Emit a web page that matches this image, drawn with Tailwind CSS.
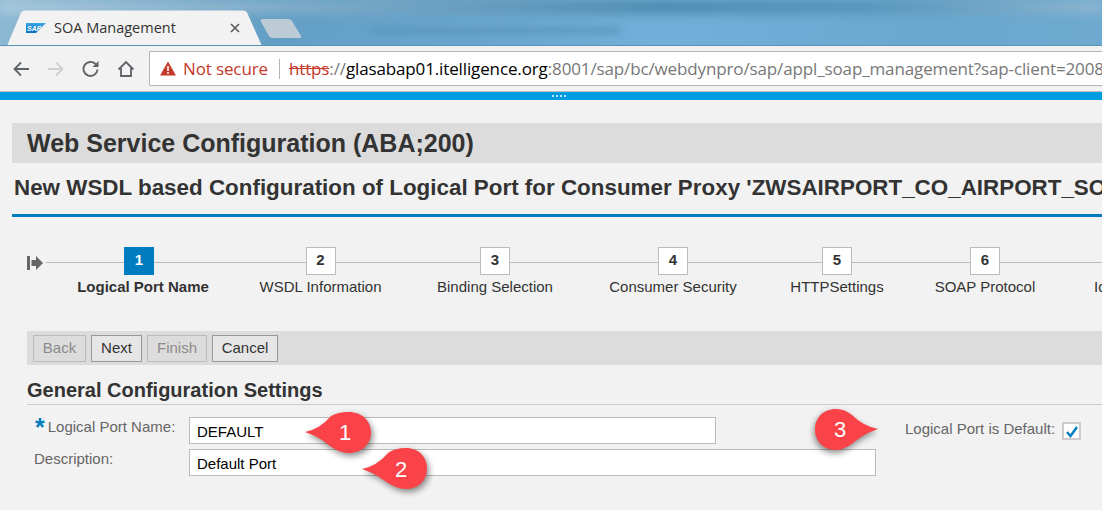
<!DOCTYPE html>
<html lang="en">
<head>
  <meta charset="UTF-8" />
  <title>SOA Management</title>
  <script src="https://cdn.jsdelivr.net/npm/@tailwindcss/browser@4"></script>
</head>
<body class="w-[1102px] h-[510px] overflow-hidden bg-[#f2f2f2] font-['Liberation_Sans',sans-serif] text-[#333] relative">

  <!-- Browser tab strip -->
  <div class="relative h-[46px] border-b border-[#5a93b5] bg-[linear-gradient(100deg,#8db9d3_0%,#639fc5_25%,#6aa6cf_45%,#72afd9_60%,#6aa8d0_85%,#6fa9cf_100%)] overflow-hidden">
    <div class="absolute left-0 top-0 w-full h-[14px] bg-[linear-gradient(90deg,#a9c8dc_0%,#7ba9c6_30%,#4f8bb0_60%,#5b96bb_80%,#8cb6d0_100%)] blur-[5px]"></div>
    <div class="absolute left-[370px] top-[27px] w-[250px] h-[7px] bg-[#5a93bb]/70 blur-[3px]"></div>
    <svg class="absolute left-0 top-0" width="320" height="46" viewBox="0 0 320 46">
      <path d="M7 46 L21 12.500 Q22 10.500 25 10.500 L243 10.500 Q246 10.500 247 12.500 L262 46 Z" fill="#f2f2f2"/>
      <path d="M263 19 L288 19 Q291 19 292 21 L301 36 Q302 38 299 38 L273 38 Q270 38 269 36 L261 22 Q260 19 263 19 Z" fill="#bccbd6"/>
    </svg>
    <div class="absolute left-[26px] top-[23px] w-[20px] h-[10px] bg-[linear-gradient(#3aa6e6,#0a6fc0)] [clip-path:polygon(0_0,100%_0,50%_100%,0_100%)] flex items-center pl-[1px]">
      <span class="text-[7px] leading-none font-bold italic text-white">SAP</span>
    </div>
    <span class="absolute left-[54px] top-[18px] text-[14.500px] leading-[20px] text-[#333] font-['Open_Sans',sans-serif]">SOA Management</span>
    <svg class="absolute left-[229px] top-[22px]" width="12" height="12" viewBox="0 0 12 12"><path d="M2 2 L10 10 M10 2 L2 10" stroke="#5a5a5a" stroke-width="1.600"/></svg>
  </div>

  <!-- Browser toolbar -->
  <div class="h-[46px] bg-[#f2f2f2] border-b border-[#bdbdbd] flex items-center pl-[12px]">
    <svg width="18" height="18" viewBox="0 0 18 18" class="mr-[17px]"><path d="M17 9 H2.500 M9 2.500 L2.500 9 L9 15.500" fill="none" stroke="#5f6368" stroke-width="1.800"/></svg>
    <svg width="18" height="18" viewBox="0 0 18 18" class="mr-[17px]"><path d="M1 9 H15.500 M9 2.500 L15.500 9 L9 15.500" fill="none" stroke="#d0d0d0" stroke-width="1.800"/></svg>
    <svg width="18" height="18" viewBox="0 0 18 18" class="mr-[17px]"><path d="M15.500 9.500 A7 7 0 1 1 13.500 4" fill="none" stroke="#5f6368" stroke-width="1.900"/><path d="M16.500 1 V7 H10.500 Z" fill="#5f6368"/></svg>
    <svg width="18" height="18" viewBox="0 0 18 18" class="mr-[14px]"><path d="M1.500 9.500 L9 2 L16.500 9.500 M4 8 V16 H14 V8" fill="none" stroke="#5f6368" stroke-width="1.800"/></svg>
    <div class="flex-1 h-[35px] bg-white border border-[#b4b4b4] border-r-0 rounded-l-[2px] flex items-center pl-[10px] overflow-hidden whitespace-nowrap font-['Open_Sans',sans-serif] text-[17px] tracking-[-0.130px]">
      <svg width="16" height="15" viewBox="0 0 16 15" class="mr-[7px] shrink-0"><path d="M8 0.500 L16 14.500 H0 Z" fill="#c5392b"/><path d="M7.200 5 H8.800 V10 H7.200 Z M7.200 11 H8.800 V12.700 H7.200 Z" fill="#fff"/></svg>
      <span class="text-[#c5392b]">Not secure</span>
      <span class="w-px h-[20px] bg-[#b4b4b4] ml-[11px] mr-[9px] shrink-0"></span>
      <span class="text-[#c5392b] line-through">https</span><span class="text-[#777]">://</span><span class="text-black">glasabap01.itelligence.org</span><span class="text-[#777]">:8001/sap/bc/webdynpro/sap/appl_soap_management?sap-client=2008</span>
    </div>
  </div>

  <!-- Blue shell bar -->
  <div class="h-[8px] bg-[#009de0] flex items-center justify-center gap-[2px] pl-[16px]">
    <span class="w-[2px] h-[2px] bg-[#bfe6f7]"></span><span class="w-[2px] h-[2px] bg-[#bfe6f7]"></span><span class="w-[2px] h-[2px] bg-[#bfe6f7]"></span><span class="w-[2px] h-[2px] bg-[#bfe6f7]"></span>
  </div>

  <!-- Page -->
  <div class="pl-[12px] pt-[23px]">
    <div class="h-[40px] pt-[1px] bg-[#dcdcdc] flex items-center pl-[15px] text-[25px] font-bold whitespace-nowrap">Web Service Configuration (ABA;200)</div>
    <div class="h-[54px] pb-[1px] border-b-[3px] border-[#007cc0] flex items-center pl-[2px] text-[22.400px] font-bold whitespace-nowrap overflow-hidden">New WSDL based Configuration of Logical Port for Consumer Proxy 'ZWSAIRPORT_CO_AIRPORT_SOAP'</div>

    <!-- Roadmap -->
    <div class="relative h-[84px] mt-[30px] pl-[15px] flex items-start overflow-hidden">
      <svg width="16" height="14" viewBox="0 0 16 14" class="mt-[9px] mr-[5px] shrink-0"><path d="M0 0 H3 V14 H0 Z M4.500 4 H9 V0 L16 7 L9 14 V10 H4.500 Z" fill="#666"/></svg>
      <div class="absolute left-[34px] right-0 top-[15px] h-px bg-[#bbb]"></div>
      <div class="relative flex items-start text-[15px] text-center">
        <div class="w-[182px] shrink-0 flex flex-col items-center"><span class="w-[30px] h-[28px] pb-[2px] bg-[#007cc0] text-white font-bold flex items-center justify-center">1</span><span class="mt-[4px] leading-[16px] font-bold whitespace-nowrap translate-x-[4px]">Logical Port Name</span></div>
        <div class="w-[181px] shrink-0 flex flex-col items-center"><span class="w-[30px] h-[28px] pb-[2px] bg-white border border-[#bbb] font-bold flex items-center justify-center">2</span><span class="mt-[4px] leading-[16px] whitespace-nowrap">WSDL Information</span></div>
        <div class="w-[168px] shrink-0 flex flex-col items-center"><span class="w-[30px] h-[28px] pb-[2px] bg-white border border-[#bbb] font-bold flex items-center justify-center">3</span><span class="mt-[4px] leading-[16px] whitespace-nowrap">Binding Selection</span></div>
        <div class="w-[188px] shrink-0 flex flex-col items-center"><span class="w-[30px] h-[28px] pb-[2px] bg-white border border-[#bbb] font-bold flex items-center justify-center">4</span><span class="mt-[4px] leading-[16px] whitespace-nowrap">Consumer Security</span></div>
        <div class="w-[140px] shrink-0 flex flex-col items-center"><span class="w-[30px] h-[28px] pb-[2px] bg-white border border-[#bbb] font-bold flex items-center justify-center">5</span><span class="mt-[4px] leading-[16px] whitespace-nowrap">HTTPSettings</span></div>
        <div class="w-[156px] shrink-0 flex flex-col items-center"><span class="w-[30px] h-[28px] pb-[2px] bg-white border border-[#bbb] font-bold flex items-center justify-center">6</span><span class="mt-[4px] leading-[16px] whitespace-nowrap">SOAP Protocol</span></div>
        <div class="w-[60px] shrink-0 flex flex-col items-start"><span class="h-[28px]"></span><span class="mt-[4px] pl-[31px] leading-[16px] whitespace-nowrap">Identifiable</span></div>
      </div>
    </div>

    <!-- Wizard buttons -->
    <div class="ml-[15px] h-[34px] bg-[#dcdcdc] flex items-center pl-[6px] gap-[5px] text-[15px]">
      <button class="h-[27px] w-[53px] border border-[#bbb] text-[#8a8a8a]">Back</button>
      <button class="h-[27px] w-[51px] border border-[#999] bg-[#e6e6e6]">Next</button>
      <button class="h-[27px] w-[60px] border border-[#bbb] text-[#8a8a8a]">Finish</button>
      <button class="h-[27px] w-[66px] border border-[#999] bg-[#e6e6e6]">Cancel</button>
    </div>

    <!-- Form -->
    <div class="ml-[15px] mt-[14px] h-[26px] border-b border-[#ccc] text-[20px] leading-[22px] font-bold whitespace-nowrap">General Configuration Settings</div>
    <div class="ml-[15px] text-[15px] text-[#666] relative">
      <div class="flex items-start pt-[12px] h-[44px]">
        <span class="w-[162px] flex pl-[8px] pt-[2px] leading-[16px] whitespace-nowrap"><span class="text-[#007cc0] text-[25px] leading-[16px] font-bold mr-[3px]">*</span>Logical Port Name:</span>
        <input class="w-[527px] h-[27px] pt-[2px] bg-white border border-[#bbb] px-[7px] text-black" value="DEFAULT" />
        <span class="ml-[189px] mt-[4px] leading-[16px] whitespace-nowrap">Logical Port is Default:</span>
        <span class="ml-[7px] mt-[5px] w-[19px] h-[18px] bg-white border-[2px] border-[#ccc] flex items-center justify-center">
          <svg width="14" height="13" viewBox="0 0 14 13"><path d="M2 7 L5.500 11 L12 2" fill="none" stroke="#007cc0" stroke-width="2.400"/></svg>
        </span>
      </div>
      <div class="flex items-start">
        <span class="w-[162px] pl-[7px] leading-[16px] pt-[2px]">Description:</span>
        <input class="w-[687px] h-[27px] pt-[2px] bg-white border border-[#bbb] px-[7px] text-black" value="Default Port" />
      </div>
    </div>
  </div>

  <!-- Callouts -->
  <div class="absolute left-[300px] top-[408px] w-[76px] h-[50px]">
    <svg width="76" height="50" viewBox="0 0 76 50" class="drop-shadow-[2px_3px_3px_rgba(0,0,0,0.45)]"><path d="M5 24 Q20 21 31 8 Q38 4 49 4 C62 4 71 13 71 24.500 C71 36 62 45 49 45 C38 45 30 38 22 32 Q14 27 5 24 Z" fill="#fa4348"/></svg>
    <span class="absolute left-[39px] top-[11px] text-[22px] leading-[28px] text-white">1</span>
  </div>
  <div class="absolute left-[357px] top-[444px] w-[76px] h-[50px]">
    <svg width="76" height="50" viewBox="0 0 76 50" class="drop-shadow-[2px_3px_3px_rgba(0,0,0,0.45)]"><path d="M5 25 Q20 22 31 9 Q38 4 49 4 C62 4 70 13 70 24.500 C70 36 62 45 49 45 C38 45 30 38 22 33 Q14 28 5 25 Z" fill="#fa4348"/></svg>
    <span class="absolute left-[38px] top-[12px] text-[22px] leading-[28px] text-white">2</span>
  </div>
  <div class="absolute left-[811px] top-[405px] w-[72px] h-[50px]">
    <svg width="72" height="50" viewBox="0 0 72 50" class="drop-shadow-[-1px_3px_3px_rgba(0,0,0,0.45)]"><path d="M67 24 Q52 21 41 10 Q34 4 25 4 C12 4 4 13 4 24.500 C4 36 12 45 25 45 C34 45 42 38 50 32 Q58 27 67 24 Z" fill="#fa4348"/></svg>
    <span class="absolute left-[23px] top-[11px] text-[22px] leading-[28px] text-white">3</span>
  </div>
</body>
</html>
